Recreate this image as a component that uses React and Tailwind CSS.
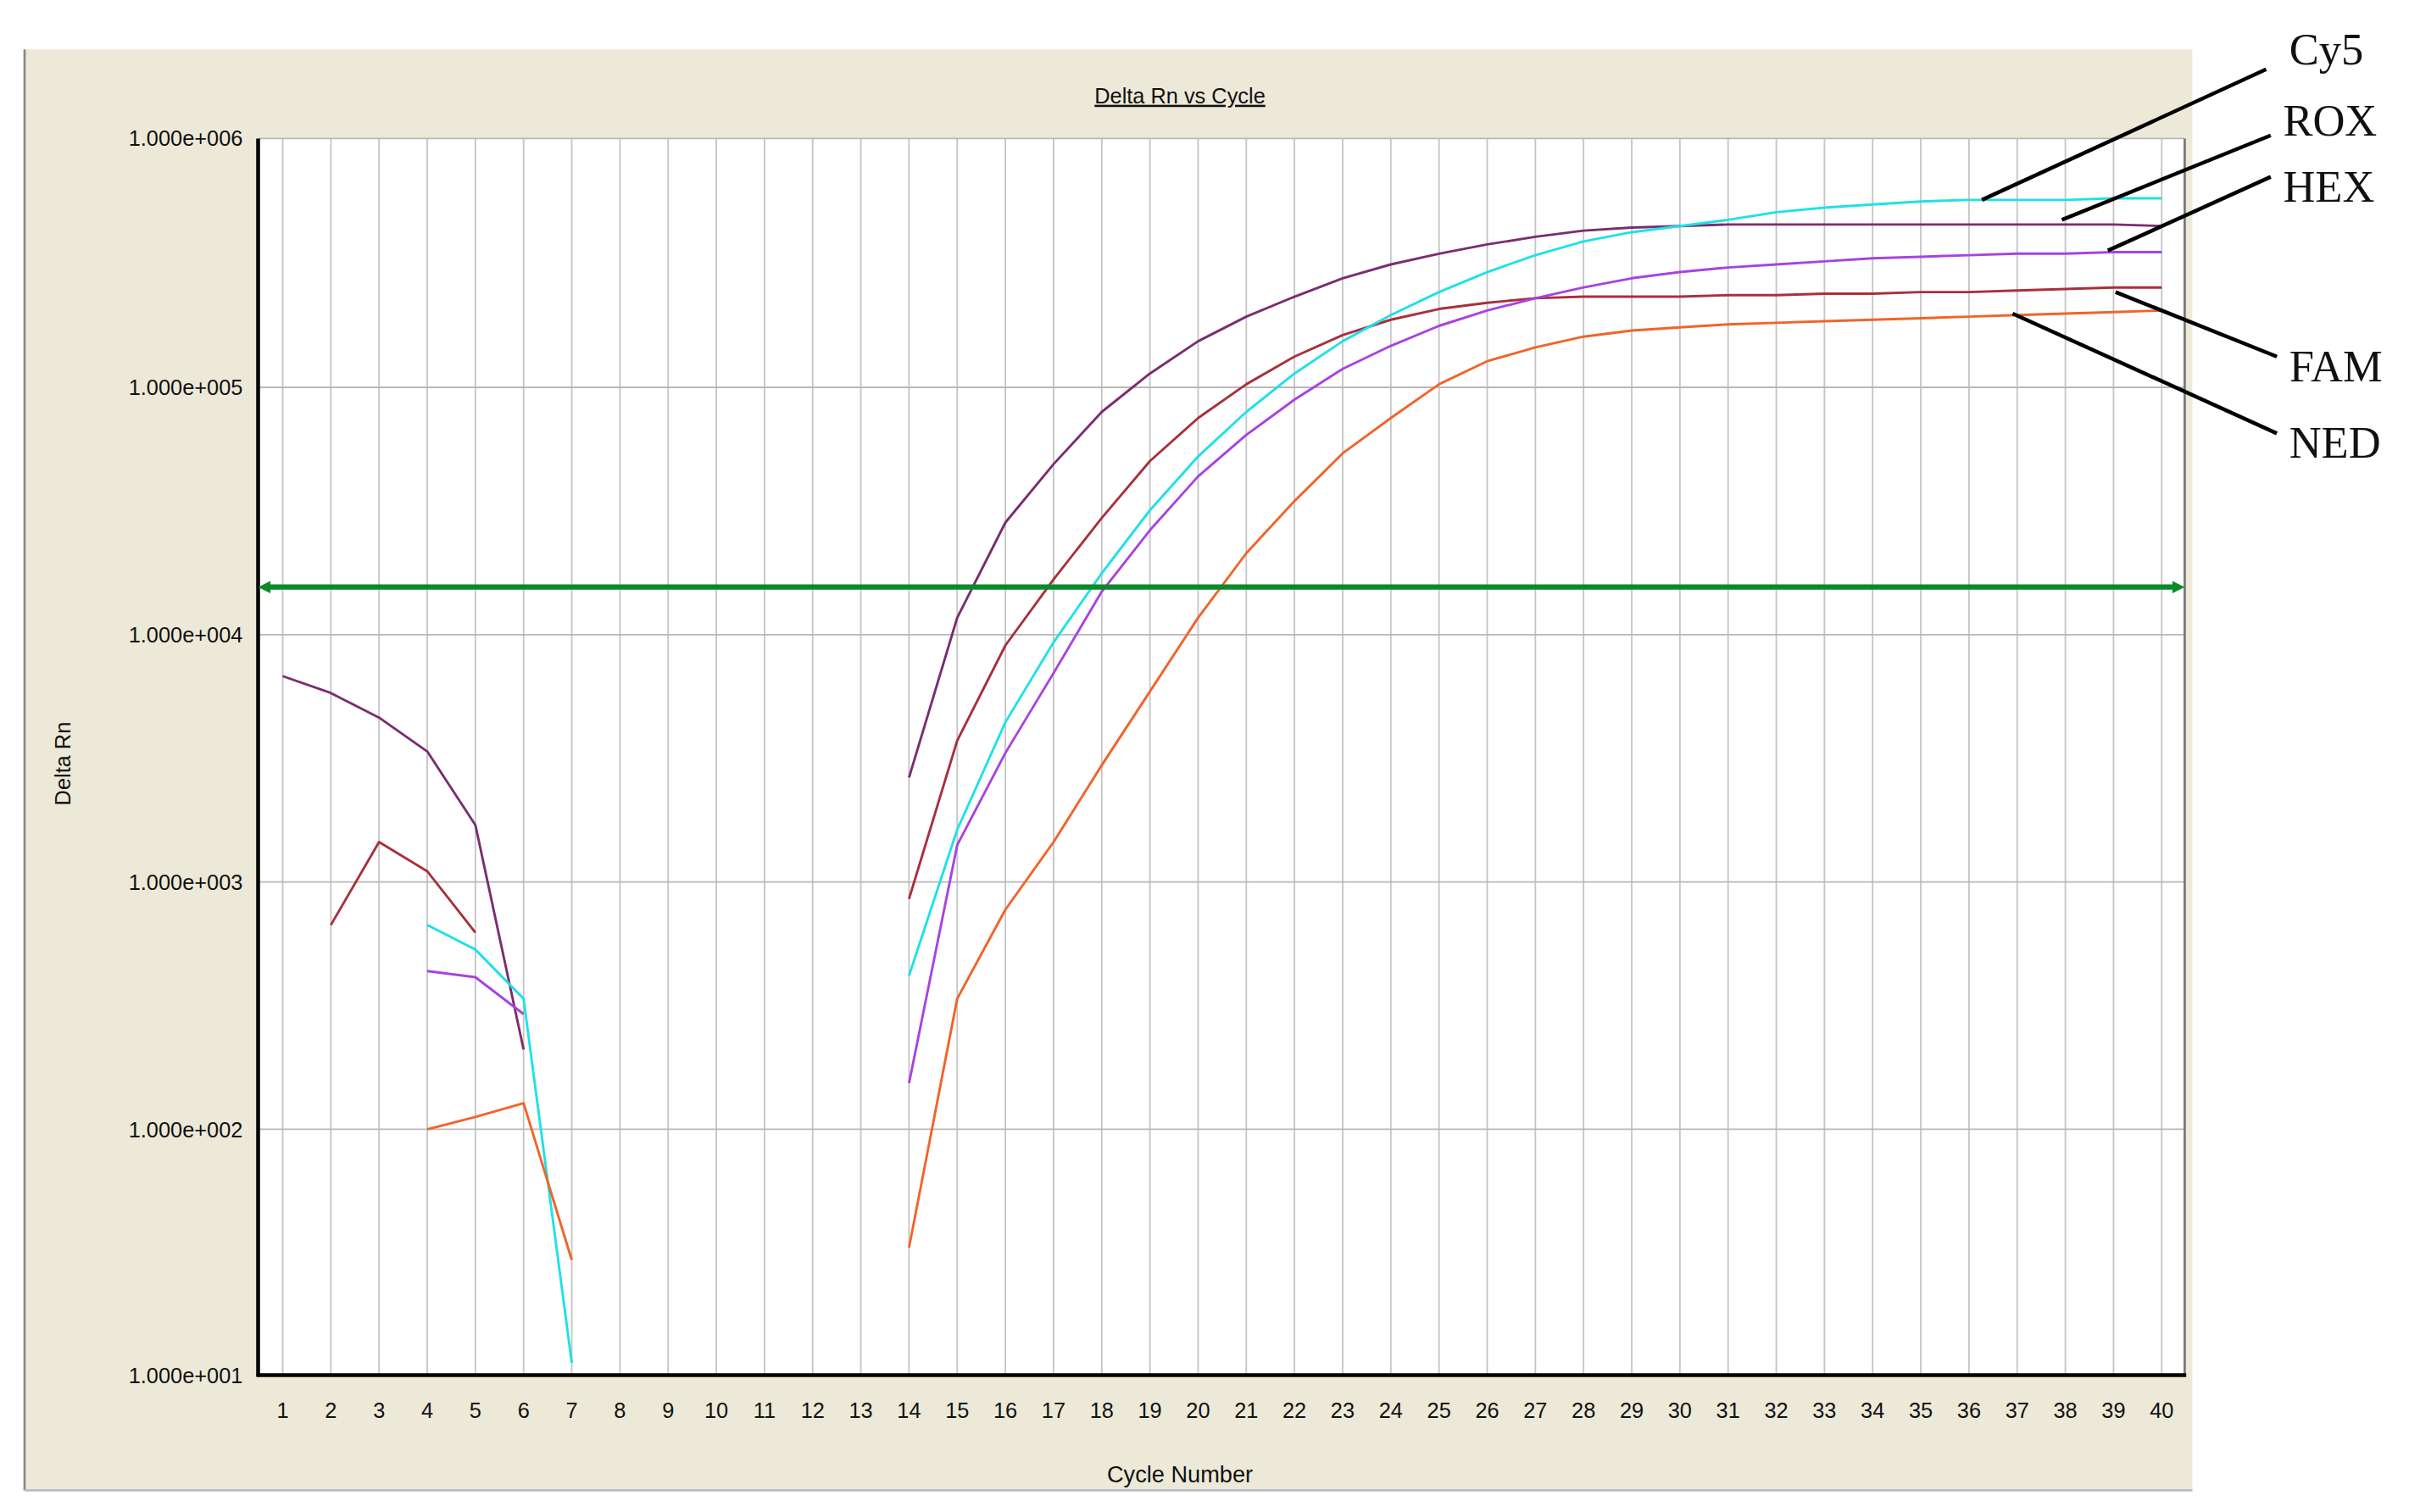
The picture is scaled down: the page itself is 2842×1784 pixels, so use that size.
import React from 'react';

const X = (c) => 184 + 31.36 * (c - 1);

// y values in chart pixels, per cycle
const series = [
  { color: '#7b2d6e', early: [[1, 440], [2, 451], [3, 467], [4, 489], [5, 537], [6, 683]],
    late: [506, 402, 340, 302, 268, 243, 222, 206, 193, 181, 172, 165, 159, 154, 150, 148, 147, 146, 146, 146, 146, 146, 146, 146, 146, 146, 147] },
  { color: '#a8303c', early: [[2, 602], [3, 548], [4, 567], [5, 607]],
    late: [585, 482, 420, 377, 337, 300, 272, 250, 232, 218, 208, 201, 197, 194, 193, 193, 193, 192, 192, 191, 191, 190, 190, 189, 188, 187, 187] },
  { color: '#20e0e8', early: [[4, 602], [5, 618], [6, 650], [7, 887]],
    late: [635, 540, 470, 418, 373, 332, 297, 268, 243, 222, 205, 190, 177, 166, 157, 151, 147, 143, 138, 135, 133, 131, 130, 130, 130, 129, 129] },
  { color: '#a843e0', early: [[4, 632], [5, 636], [6, 660]],
    late: [705, 550, 490, 438, 385, 345, 310, 283, 260, 240, 225, 212, 202, 194, 187, 181, 177, 174, 172, 170, 168, 167, 166, 165, 165, 164, 164] },
  { color: '#f0642a', early: [[4, 735], [5, 727], [6, 718], [7, 820]],
    late: [812, 650, 592, 548, 498, 450, 402, 360, 326, 295, 272, 250, 235, 226, 219, 215, 213, 211, 210, 209, 208, 207, 206, 205, 204, 203, 202] },
];

const pts = (arr) => arr.map(([c, y]) => `${X(c)},${y}`).join(' ');

const decades = [
  ['1.000e+006', 90], ['1.000e+005', 252], ['1.000e+004', 413],
  ['1.000e+003', 574], ['1.000e+002', 735], ['1.000e+001', 895],
];

const labels = [
  ['Cy5', 1490, 42, [1290, 130, 1475, 45]],
  ['ROX', 1486, 88, [1342, 143, 1478, 88]],
  ['HEX', 1486, 131, [1372, 163, 1478, 115]],
  ['FAM', 1490, 248, [1377, 190, 1482, 232]],
  ['NED', 1490, 298, [1310, 204, 1482, 282]],
];

export default function App() {
  const cycles = Array.from({ length: 40 }, (_, i) => i + 1);
  return (
    <div className="w-[2842px] h-[1784px] bg-white overflow-hidden">
      <svg viewBox="0 0 1568 984" width="2842" height="1784" className="block">
        <rect x="16" y="32" width="1411" height="938" fill="#ece9d8" />
        <line x1="16" y1="32" x2="16" y2="970" stroke="#888" strokeWidth="1.5" />
        <line x1="16" y1="970" x2="1427" y2="970" stroke="#bbb" strokeWidth="1.5" />
        <rect x="168" y="90" width="1254" height="805" fill="#fff" />
        {cycles.map((c) => (
          <line key={c} x1={X(c)} y1="90" x2={X(c)} y2="895" stroke="#c4c4c4" strokeWidth="1" />
        ))}
        {decades.map(([, y]) => (
          <line key={y} x1="168" y1={y} x2="1422" y2={y} stroke="#b8b8b8" strokeWidth="1" />
        ))}
        <line x1="1422" y1="90" x2="1422" y2="895" stroke="#777" strokeWidth="1.5" />
        <line x1="168" y1="90" x2="168" y2="896" stroke="#000" strokeWidth="2.5" />
        <line x1="167" y1="895" x2="1423" y2="895" stroke="#000" strokeWidth="2.5" />

        {series.map((s, i) => (
          <g key={i} fill="none" stroke={s.color} strokeWidth="1.6" strokeLinejoin="round">
            <polyline points={pts(s.early)} />
            <polyline points={pts(s.late.map((y, j) => [14 + j, y]))} />
          </g>
        ))}

        <line x1="172" y1="382" x2="1418" y2="382" stroke="#0a8a2a" strokeWidth="3.5" />
        <path d="M168 382 L176 378 L176 386 Z M1422 382 L1414 378 L1414 386 Z" fill="#0a8a2a" />

        <g fontFamily="'Liberation Sans', Arial, sans-serif" fill="#111">
          <text x="768" y="67" fontSize="14" textAnchor="middle" textDecoration="underline">Delta Rn vs Cycle</text>
          {decades.map(([t, y]) => (
            <text key={t} x="158" y={y + 5} fontSize="14" textAnchor="end">{t}</text>
          ))}
          {cycles.map((c) => (
            <text key={c} x={X(c)} y="923" fontSize="14" textAnchor="middle">{c}</text>
          ))}
          <text x="768" y="965" fontSize="15" textAnchor="middle">Cycle Number</text>
          <text x="46" y="497" fontSize="14" textAnchor="middle" transform="rotate(-90 46 497)">Delta Rn</text>
        </g>

        <g fontFamily="'Liberation Serif', 'Times New Roman', serif" fill="#111">
          {labels.map(([t, x, y, l]) => (
            <g key={t}>
              <line x1={l[0]} y1={l[1]} x2={l[2]} y2={l[3]} stroke="#000" strokeWidth="2.5" />
              <text x={x} y={y} fontSize="29">{t}</text>
            </g>
          ))}
        </g>
      </svg>
    </div>
  );
}
